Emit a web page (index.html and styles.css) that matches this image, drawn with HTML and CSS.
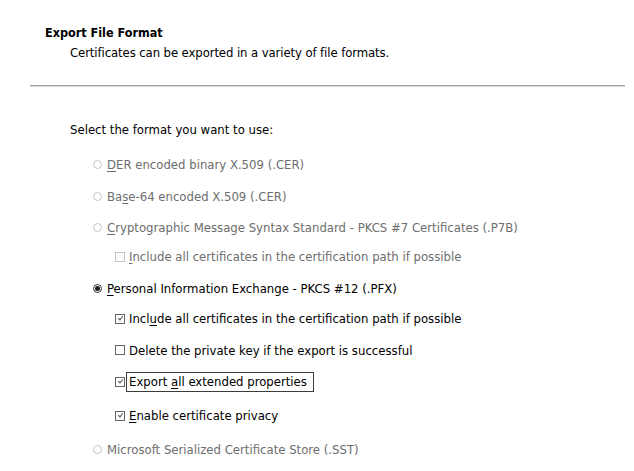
FILE: index.html
```html
<!DOCTYPE html>
<html lang="en">
<head>
    <meta charset="UTF-8">
    <title>Certificate Export Wizard</title>
    <link rel="stylesheet" href="styles.css">
</head>
<body>
    <div class="header">
        <h1 class="title">Export File Format</h1>
        <p class="subtitle">Certificates can be exported in a variety of file formats.</p>
    </div>

    <div class="divider"></div>

    <div class="content">
        <p class="prompt">Select the format you want to use:</p>

        <!-- formats -->
        <div class="options">
            <div class="opt disabled">
                <span class="radio"></span>
                <span><u>D</u>ER encoded binary X.509 (.CER)</span>
            </div>
            <div class="opt disabled">
                <span class="radio"></span>
                <span>Ba<u>s</u>e-64 encoded X.509 (.CER)</span>
            </div>
            <div class="opt disabled">
                <span class="radio"></span>
                <span><u>C</u>ryptographic Message Syntax Standard - PKCS #7 Certificates (.P7B)</span>
            </div>
            <div class="opt sub disabled up3">
                <span class="check"></span>
                <span><u>I</u>nclude all certificates in the certification path if possible</span>
            </div>
            <div class="opt">
                <span class="radio on"></span>
                <span><u>P</u>ersonal Information Exchange - PKCS #12 (.PFX)</span>
            </div>
            <div class="opt sub up1">
                <span class="check on"></span>
                <span>Incl<u>u</u>de all certificates in the certification path if possible</span>
            </div>
            <div class="opt sub">
                <span class="check"></span>
                <span>Delete the private key if the export is successful</span>
            </div>
            <div class="opt sub">
                <span class="check on"></span>
                <span class="focused">Export <u>a</u>ll extended properties</span>
            </div>
            <div class="opt sub down2">
                <span class="check on"></span>
                <span><u>E</u>nable certificate privacy</span>
            </div>
            <div class="opt disabled down2">
                <span class="radio"></span>
                <span>Microsoft Serialized Certificate Store (.SST)</span>
            </div>
        </div>
    </div>
</body>
</html>
```

FILE: styles.css
```css
body {
    margin: 0;
    background: #ffffff;
    color: #000000;
    font-family: "DejaVu Sans Condensed", "Liberation Sans", Arial, sans-serif;
    font-size: 13px;
    overflow: hidden;
}
.header {
    padding: 24px 0 0 45px;
    height: 61px;
}
.title {
    margin: 0;
    font-size: 12.5px;
    font-weight: bold;
    line-height: 18px;
}
.subtitle {
    margin: 2px 0 0 25px;
    line-height: 18px;
    letter-spacing: -0.1px;
}
.divider {
    margin: 0 9px 0 30px;
    height: 1px;
    background: #a0a0a0;
    border-bottom: 1px solid #dcdcdc;
}
.content {
    padding: 33px 0 0 70px;
}
.prompt {
    margin: 0;
    line-height: 20px;
}
.options {
    margin: 9px 0 0 23px;
}
.opt {
    display: flex;
    align-items: center;
    height: 31.6px;
}
.opt.sub {
    padding-left: 22px;
}
.up3 {
    margin-top: -3px;
}
.up1 {
    margin-top: -1px;
}
.down2 {
    margin-top: 2px;
}
.disabled {
    color: #6d6d6d;
}
.radio {
    width: 9px;
    height: 9px;
    border: 1px solid #333333;
    border-radius: 50%;
    margin-right: 5px;
    position: relative;
    box-sizing: border-box;
}
.disabled .radio {
    border-color: #c4c4c4;
}
.radio.on::after {
    content: "";
    position: absolute;
    left: 1px;
    top: 1px;
    width: 5px;
    height: 5px;
    border-radius: 50%;
    background: #1a1a1a;
}
.check {
    width: 10px;
    height: 10px;
    border: 1px solid #666666;
    box-sizing: border-box;
    margin-right: 4px;
    position: relative;
}
.disabled .check {
    border-color: #c4c4c4;
}
.check.on::after {
    content: "";
    position: absolute;
    left: 2.5px;
    top: 0.5px;
    width: 2px;
    height: 4px;
    border-right: 1px solid #555555;
    border-bottom: 1px solid #555555;
    transform: rotate(40deg);
}
.focused {
    border: 1px solid #3c3c3c;
    padding: 0 6px 0 2px;
    margin-left: -3px;
    line-height: 18px;
}
u {
    text-decoration-thickness: 1px;
    text-underline-offset: 2px;
}
```
